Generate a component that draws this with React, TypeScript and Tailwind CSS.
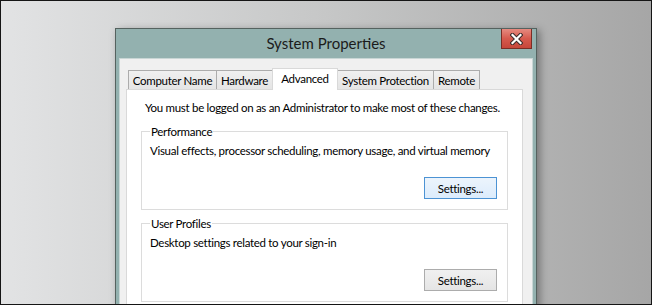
const FONT = { fontFamily: 'Lato, "Noto Sans", sans-serif' };

const TEXT = 'text-[11.5px] leading-[15px] tracking-[-0.3px] text-black';

const TABS = [
  { label: 'Computer Name', w: 'w-[89px]' },
  { label: 'Hardware', w: 'w-[57px]' },
  { label: 'Advanced', w: 'w-[66px]', active: true },
  { label: 'System Protection', w: 'w-[97px]' },
  { label: 'Remote', w: 'w-[47px]' },
];

function CloseButton() {
  return (
    <div className="absolute top-0 right-[4px] flex h-[20px] w-[31px] items-center justify-center border border-t-0 border-[#7a2e26] bg-linear-to-b from-[#e58a80] via-[#d65a4e] to-[#c6463a]">
      <svg width="13" height="12" viewBox="0 0 13 12">
        <path d="M2.5 2 L10.5 10 M10.5 2 L2.5 10" stroke="#3a2a2a" strokeWidth="4.2" strokeLinecap="square" />
        <path d="M2.5 2 L10.5 10 M10.5 2 L2.5 10" stroke="#ffffff" strokeWidth="2.2" strokeLinecap="square" />
      </svg>
    </div>
  );
}

function Tab({ label, w, active }: { label: string; w: string; active?: boolean }) {
  if (active) {
    return (
      <div
        className={`relative z-10 -ml-px -mb-px flex h-[22px] ${w} items-start justify-center whitespace-nowrap border border-b-0 border-[#d9d9d9] bg-white pt-[2px] ${TEXT}`}
      >
        {label}
      </div>
    );
  }
  return (
    <div
      className={`-ml-px flex h-[19px] ${w} items-center justify-center whitespace-nowrap border border-b-0 border-[#acacac] bg-linear-to-b from-[#f0f0f0] to-[#e5e5e5] first:ml-0 ${TEXT}`}
    >
      {label}
    </div>
  );
}

function SettingsButton({ focused }: { focused?: boolean }) {
  return (
    <button
      className={`h-[22px] w-[73px] border ${TEXT} ${
        focused
          ? 'border-[#4c93d4] bg-linear-to-b from-[#ecf4fc] to-[#dcecfc]'
          : 'border-[#acacac] bg-linear-to-b from-[#f0f0f0] to-[#e5e5e5]'
      }`}
    >
      Settings...
    </button>
  );
}

function GroupBox({
  title,
  text,
  focused,
  className,
}: {
  title: string;
  text: string;
  focused?: boolean;
  className?: string;
}) {
  return (
    <fieldset className={`min-w-0 border border-[#dcdcdc] px-[8px] pb-[10px] ${className ?? ''}`}>
      <legend className={`px-[1px] ${TEXT}`}>{title}</legend>
      <p className={`mt-[4px] whitespace-nowrap ${TEXT}`}>{text}</p>
      <div className="mt-[19px] flex justify-end pr-[2px]">
        <SettingsButton focused={focused} />
      </div>
    </fieldset>
  );
}

export default function App() {
  return (
    <div
      style={FONT}
      className="h-[305px] w-[652px] overflow-hidden border border-[#151515] bg-linear-to-r from-[#e2e3e4] via-[#c6c7c7] to-[#a6a6a6] pl-[114px] pt-[27px]"
    >
      <div className="relative w-[422px] border border-[#55625f] bg-[#93b1af] shadow-[3px_2px_8px_rgba(0,0,0,0.35)]">
        <div className="flex h-[29px] items-center justify-center text-[15px] text-[#1b1b1b]">
          System Properties
        </div>
        <CloseButton />
        <div className="mx-[3px] border border-[#c9d6d5] bg-[#f0f0f0] px-[6px] pt-[9px] pb-[40px]">
          <div className="flex items-end pl-[2px]">
            {TABS.map((t) => (
              <Tab key={t.label} {...t} />
            ))}
          </div>
          <div className="w-[397px] border border-[#d9d9d9] bg-white px-[14px] pt-[10px] pb-[20px]">
            <p className={`whitespace-nowrap pl-[4px] ${TEXT}`}>
              You must be logged on as an Administrator to make most of these changes.
            </p>
            <GroupBox
              className="mt-[9px]"
              title="Performance"
              text="Visual effects, processor scheduling, memory usage, and virtual memory"
              focused
            />
            <GroupBox
              className="mt-[6px]"
              title="User Profiles"
              text="Desktop settings related to your sign-in"
            />
          </div>
        </div>
      </div>
    </div>
  );
}
